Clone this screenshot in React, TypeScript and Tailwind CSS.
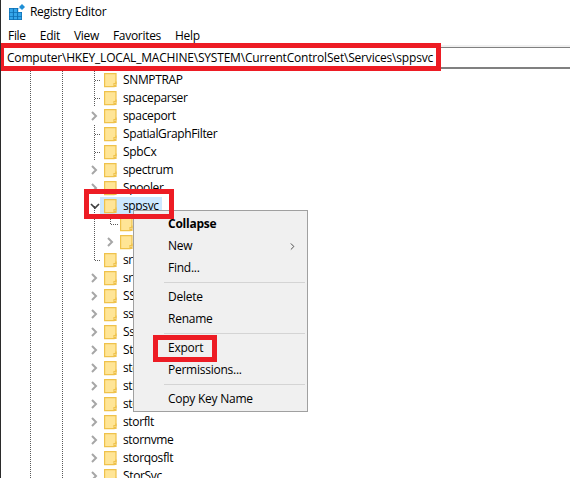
import { ChevronRight } from "lucide-react";

const FONT = "font-['Open_Sans','Noto_Sans',sans-serif]";
const DOTS_V =
  "bg-[repeating-linear-gradient(to_bottom,#5a5a5a_0_1px,transparent_1px_2px)]";
const DOTS_H =
  "bg-[repeating-linear-gradient(to_right,#5a5a5a_0_1px,transparent_1px_2px)]";

type Kind = "leaf" | "closed" | "open";
type Stem = "none" | "full" | "top" | "bottom";
type Row = { name: string; kind: Kind; stem: Stem; child?: boolean; selected?: boolean };

const rows: Row[] = [
  { name: "SNMPTRAP", kind: "leaf", stem: "full" },
  { name: "spaceparser", kind: "leaf", stem: "full" },
  { name: "spaceport", kind: "closed", stem: "none" },
  { name: "SpatialGraphFilter", kind: "leaf", stem: "full" },
  { name: "SpbCx", kind: "leaf", stem: "full" },
  { name: "spectrum", kind: "closed", stem: "none" },
  { name: "Spooler", kind: "closed", stem: "none" },
  { name: "sppsvc", kind: "open", stem: "bottom", selected: true },
  { name: "", kind: "leaf", stem: "full", child: true },
  { name: "", kind: "closed", stem: "full", child: true },
  { name: "sr", kind: "leaf", stem: "top" },
  { name: "srv2", kind: "closed", stem: "none" },
  { name: "SSDPSRV", kind: "closed", stem: "none" },
  { name: "ssh-agent", kind: "closed", stem: "none" },
  { name: "SstpSvc", kind: "closed", stem: "none" },
  { name: "StateRepository", kind: "closed", stem: "none" },
  { name: "stexstor", kind: "closed", stem: "none" },
  { name: "stisvc", kind: "closed", stem: "none" },
  { name: "storahci", kind: "closed", stem: "none" },
  { name: "storflt", kind: "closed", stem: "none" },
  { name: "stornvme", kind: "closed", stem: "none" },
  { name: "storqosflt", kind: "closed", stem: "none" },
  { name: "StorSvc", kind: "closed", stem: "none" },
];

const Folder = () => (
  <svg width="13" height="16" viewBox="0 0 13 16" className="shrink-0">
    <path d="M.6 1.600h11.400v10h-2v3h-9.400z" fill="#ffe596" stroke="#efc24b" strokeWidth="1.200" />
    <path d="M10 15h2.600v-5.500h-1.200v3.500h-1.400z" fill="#efc24b" />
  </svg>
);

const AppIcon = () => (
  <svg width="16" height="16" viewBox="0 0 16 16" className="shrink-0">
    <path d="M0 4h13v12H0z" fill="#0f6fb3" />
    <path d="M.7 4.700h3.200v3.200H.7zM4.900 4.700h3.200v3.200H4.900zM.7 8.700h3.200v3.200H.7zM4.900 8.700h3.200v3.200H4.900zM9.100 8.700h3.200v3.200H9.100zM.7 12.700h3.200v2.600H.7zM4.900 12.700h3.200v2.600H4.900zM9.100 12.700h3.200v2.600H9.100z" fill="#35a6ea" />
    <path d="M9.200 4.200h3.800v3.800H9.200z" fill="#fff" />
    <path d="M13 0l3 3-3 3-3-3z" fill="#1f8fd6" />
  </svg>
);

const Arrow = ({ className }: { className: string }) => (
  <svg width="7" height="10" viewBox="0 0 7 10" className={className}>
    <path d="M1 1l4 4-4 4" fill="none" stroke="#a6a6a6" strokeWidth="2" />
  </svg>
);

const TreeRow = ({ row }: { row: Row }) => (
  <div className="flex h-[18px] shrink-0">
    <div className="w-[29px]" />
    <div className={`w-px ${DOTS_V}`} />
    <div className="w-[31px]" />
    <div className={`w-px ${DOTS_V}`} />
    <div className="w-[31px]" />
    <div className="relative w-[6px]">
      {row.stem === "full" && <div className={`absolute left-0 top-0 h-full w-px ${DOTS_V}`} />}
      {row.stem === "top" && <div className={`absolute left-0 top-0 h-[9px] w-px ${DOTS_V}`} />}
      {row.stem === "bottom" && <div className={`absolute bottom-0 left-0 h-[9px] w-px ${DOTS_V}`} />}
      {row.kind === "leaf" && !row.child && (
        <div className={`absolute left-px top-[9px] h-px w-[6px] ${DOTS_H}`} />
      )}
      {row.kind === "closed" && !row.child && <Arrow className="absolute left-[-3px] top-[4px]" />}
      {row.kind === "open" && (
        <svg width="10" height="7" viewBox="0 0 10 7" className="absolute left-[-4px] top-[6px]">
          <path d="M1 1l4 4 4-4" fill="none" stroke="#404040" strokeWidth="1.700" />
        </svg>
      )}
      {row.child && row.kind === "leaf" && (
        <>
          <div className={`absolute left-[16px] top-0 h-[10px] w-px ${DOTS_V}`} />
          <div className={`absolute left-[17px] top-[9px] h-px w-[7px] ${DOTS_H}`} />
        </>
      )}
      {row.child && row.kind === "closed" && <Arrow className="absolute left-[13px] top-[4px]" />}
    </div>
    <div className={`flex h-full items-start pl-1 ${row.selected ? "bg-[#cce8ff]" : ""} ${row.child ? "ml-4" : ""}`}>
      <div className="pt-px">
        <Folder />
      </div>
      <span className="pl-[6px] pr-[3px] text-[12px] leading-[17px] tracking-[-0.36px] text-black">{row.name}</span>
    </div>
  </div>
);

const Item = ({ label, bold, arrow }: { label: string; bold?: boolean; arrow?: boolean }) => (
  <div className="flex h-[22px] items-center justify-between pl-[34px] pr-[9px]">
    <span className={bold ? "font-bold" : ""}>{label}</span>
    {arrow && <ChevronRight size={11} className="text-[#404040]" />}
  </div>
);

const Sep = () => (
  <div className="flex h-[7px] items-center pl-[30px] pr-[2px]">
    <div className="h-px w-full bg-[#d4d4d4]" />
  </div>
);

export default function App() {
  return (
    <div className={`relative flex h-[478px] w-[570px] flex-col overflow-hidden border-l border-[#2b2b2b] bg-white text-[12px] text-black ${FONT}`}>
      <div className="flex h-[24px] shrink-0 items-center gap-[5px] pl-2">
        <AppIcon />
        <span className="tracking-[-0.33px]">Registry Editor</span>
      </div>
      <div className="mt-1 flex h-[16px] shrink-0 items-center gap-[14px] pl-[7px] tracking-[-0.3px]">
        <span>File</span>
        <span>Edit</span>
        <span>View</span>
        <span>Favorites</span>
        <span>Help</span>
      </div>
      <div className="mt-px h-[24px] shrink-0 bg-[#f0f0f0] pt-[2px]">
        <div className="h-[22px] border-y border-b-2 border-[#808080] bg-white pl-[6px] leading-[19px] tracking-[-0.19px]">
          {"Computer\\HKEY_LOCAL_MACHINE\\SYSTEM\\CurrentControlSet\\Services\\sppsvc"}
        </div>
      </div>
      <div className="flex flex-col pt-[2px]">
        {rows.map((row, i) => (
          <TreeRow key={i} row={row} />
        ))}
      </div>

      <div className="absolute left-[132px] top-[210px] h-[202px] w-[175px] border border-[#a0a0a0] bg-[#f0f0f0] pt-[2px] tracking-[-0.25px]">
        <Item label="Collapse" bold />
        <Item label="New" arrow />
        <Item label="Find..." />
        <Sep />
        <Item label="Delete" />
        <Item label="Rename" />
        <Sep />
        <Item label="Export" />
        <Item label="Permissions..." />
        <Sep />
        <Item label="Copy Key Name" />
      </div>

      <div className="absolute left-[-1px] top-[43px] h-[28px] w-[441px] border-[5px] border-l-[4px] border-[#ed1c24]" />
      <div className="absolute left-[83px] top-[189px] h-[30px] w-[90px] border-[5px] border-[#ed1c24]" />
      <div className="absolute left-[152px] top-[335px] h-[27px] w-[64px] border-[5px] border-[#ed1c24]" />
    </div>
  );
}
